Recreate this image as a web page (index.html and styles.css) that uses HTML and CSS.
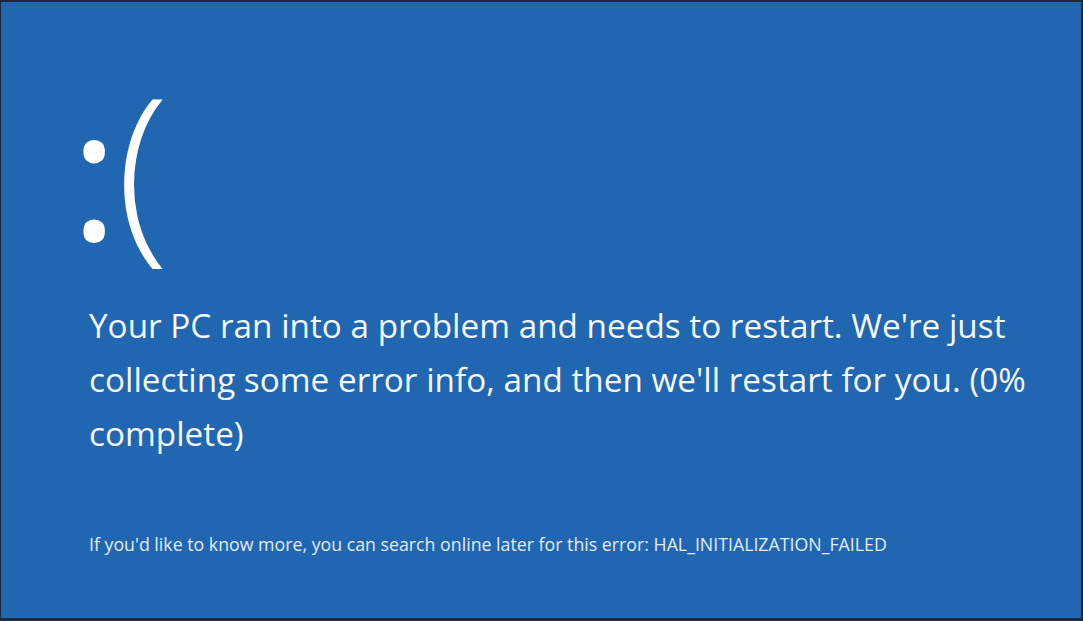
FILE: index.html
```html
<!DOCTYPE html>
<html lang="en">
<head>
<meta charset="utf-8">
<title>Blue screen</title>
<link rel="stylesheet" href="styles.css">
</head>
<body>
<div class="screen">
  <div class="content">
    <div class="face"><span class="colon">:</span><span class="paren">(</span></div>
    <p class="message">Your PC ran into a problem and needs to restart. We're just collecting some error info, and then we'll restart for you. (0% complete)</p>
    <p class="details">If you'd like to know more, you can search online later for this error: HAL_INITIALIZATION_FAILED</p>
  </div>
</div>
</body>
</html>
```

FILE: styles.css
```css
html, body {
  margin: 0;
  padding: 0;
  width: 100%;
  height: 100%;
  background: #1b2433;
}
.screen {
  box-sizing: border-box;
  width: 1083px;
  height: 621px;
  border-top: 2px solid #1d2a3c;
  border-left: 1px solid #1d2a3c;
  border-right: 2px solid #1d2a3c;
  border-bottom: 3px solid #1d2a3c;
  background: #2066b1;
  color: #ffffff;
  font-family: "Open Sans", "Noto Sans", sans-serif;
  overflow: hidden;
}
.content {
  padding: 60px 0 0 88px;
  display: flex;
  flex-direction: column;
}
.face {
  height: 236px;
  display: flex;
  align-items: flex-start;
}
.colon {
  font-size: 184px;
  font-weight: 400;
  line-height: 1;
  margin: 15px 0 0 -19px;
}
.paren {
  font-size: 194px;
  font-weight: 300;
  line-height: 1;
  margin: 4px 0 0 -2px;
}
.message {
  margin: 0;
  width: 950px;
  font-size: 33.3px;
  line-height: 54px;
  font-weight: 400;
  color: #f4f7fb;
}
.details {
  margin: 73px 0 0 0;
  font-size: 17.75px;
  line-height: 22px;
  color: #e3ebf5;
}
```
